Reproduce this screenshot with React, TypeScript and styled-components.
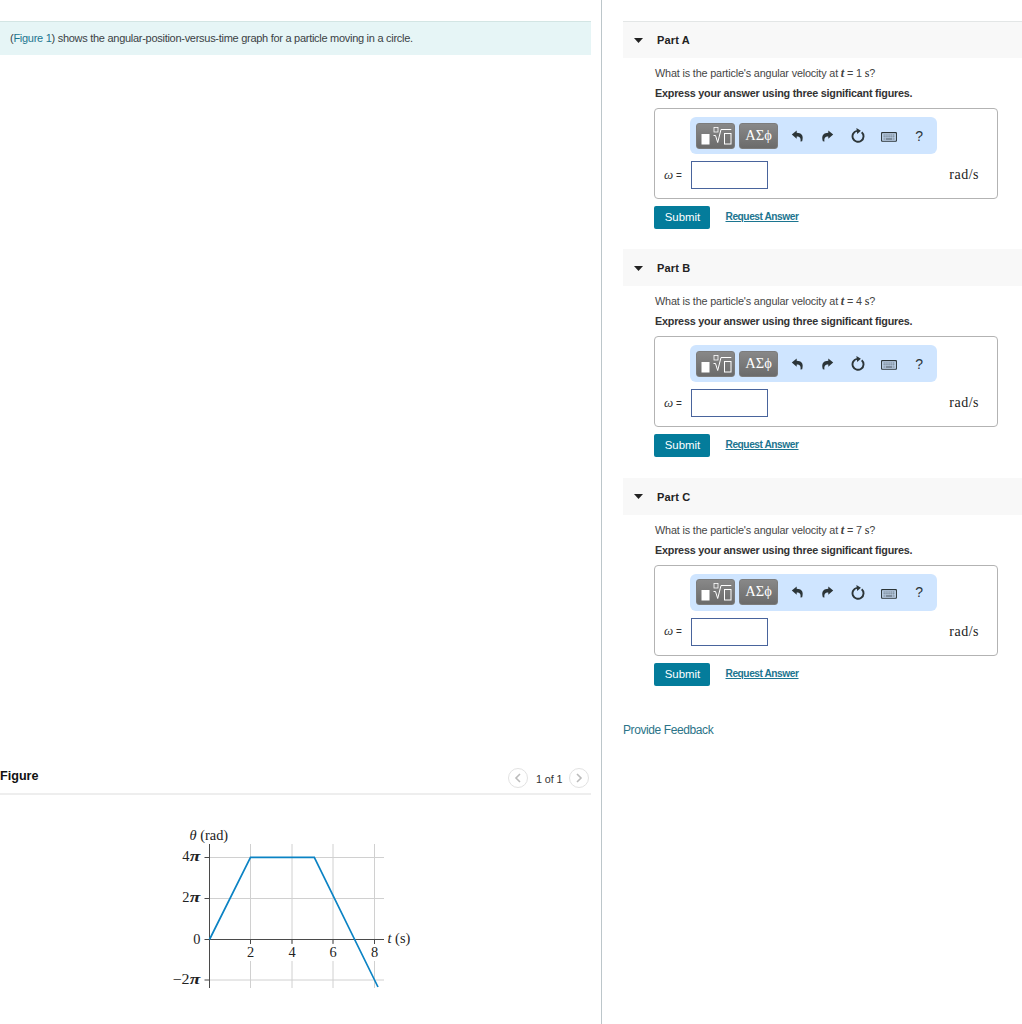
import React from "react";
import styled, { createGlobalStyle } from "styled-components";

const Global = createGlobalStyle`
  * { box-sizing: border-box; }
  body { margin: 0; background: #fff; font-family: "Liberation Sans", Arial, sans-serif; overflow: hidden; }
  svg { display: block; }
`;

const Page = styled.div`
  display: flex;
  height: 1024px;
  width: 1022px;
  overflow: hidden;
`;

const Left = styled.main`
  width: 602px;
  flex: none;
  border-right: 1px solid #bcc6ca;
  padding: 21px 10px 0 0;
  display: flex;
  flex-direction: column;
`;

const Prompt = styled.div`
  height: 34px;
  padding: 0 10px;
  border-top: 1px solid #d3e5e4;
  background: #e6f5f6;
  color: #3b4245;
  font-size: 11px;
  line-height: 32px;
  letter-spacing: -0.28px;
  white-space: nowrap;
`;

const FigureLink = styled.a`
  color: #1c7590;
`;

const FigureHead = styled.div`
  margin-top: auto;
  height: 34px;
  border-bottom: 2px solid #eeeeee;
  display: flex;
  align-items: center;
  justify-content: space-between;
  padding-right: 2px;
`;

const FigureTitle = styled.h2`
  margin: 0 0 3px;
  font-size: 12.6px;
  line-height: 16px;
  color: #111;
`;

const Pager = styled.div`
  display: flex;
  align-items: center;
  gap: 7px;
  padding-top: 2px;
`;

const PagerButton = styled.button`
  width: 20px;
  height: 20px;
  padding: 0;
  border: 1px solid #e2e2e2;
  border-radius: 50%;
  background: #fff;
  display: grid;
  place-items: center;
`;

const PagerText = styled.span`
  width: 27px;
  padding: 2px 0 0 1px;
  font-size: 10.8px;
  line-height: 14px;
  letter-spacing: -0.1px;
  color: #333;
  white-space: nowrap;
`;

const FigureBody = styled.div`
  height: 229px;
  padding: 25px 0 0 165px;
`;

const Right = styled.aside`
  flex: 1;
  min-width: 0;
  padding: 21px 0 0 21px;
`;

const Part = styled.section`
  height: 228.4px;
`;

const PartHead = styled.header<{ $first: boolean }>`
  height: 37px;
  border-top: 1px solid ${(p) => (p.$first ? "#e3e6e6" : "#f8f8f8")};
  background: #f8f8f8;
  display: flex;
  align-items: center;
  padding-left: 11px;
  gap: 14px;
`;

const PartTitle = styled.h3`
  margin: 0;
  font-size: 11px;
  line-height: 14px;
  letter-spacing: 0.15px;
  color: #222;
`;

const PartBody = styled.div`
  padding: 8px 24px 0 31px;
`;

const Question = styled.p`
  margin: 0 0 0 1px;
  font-size: 10.8px;
  line-height: 15px;
  letter-spacing: -0.15px;
  color: #454545;
  white-space: nowrap;
`;

const Variable = styled.i`
  font-family: "Liberation Serif", serif;
  font-weight: bold;
  font-size: 12.5px;
  line-height: 1;
`;

const Unit = styled.span`
  font-family: "Liberation Serif", serif;
  font-size: 12px;
  line-height: 1;
  color: #222;
`;

const Instruction = styled.p`
  margin: 4px 0 7px 1px;
  font-size: 10.8px;
  line-height: 16px;
  font-weight: bold;
  letter-spacing: -0.22px;
  color: #333;
  white-space: nowrap;
`;

const AnswerBox = styled.div`
  width: 344px;
  height: 91px;
  border: 1px solid #b3b3b3;
  border-radius: 4px;
  padding: 8px 18px 0 9px;
`;

const Toolbar = styled.div`
  width: 247px;
  height: 37px;
  margin-left: 26px;
  padding-left: 6px;
  border-radius: 6px;
  background: #cfe5ff;
  display: flex;
  align-items: center;
`;

const SymbolButton = styled.button`
  width: 39px;
  height: 26px;
  margin-right: 4px;
  padding: 0;
  border: 1px solid #7c7c7c;
  border-radius: 3px;
  background: linear-gradient(#888, #6b6b6b);
  color: #fff;
  font: 14.5px/20px "Liberation Serif", serif;
  display: grid;
  place-items: center;
`;

const SymbolText = styled.span`
  height: 22px;
`;

const Tools = styled.div`
  display: flex;
`;

const Tool = styled.span<{ $drop?: number }>`
  width: 30.5px;
  height: 20px;
  padding-top: ${(p) => p.$drop ?? 0}px;
  display: grid;
  place-items: center;
  font-size: 14px;
  line-height: 18px;
  color: #2c3538;
`;

const EntryRow = styled.div`
  display: flex;
  align-items: center;
  height: 28px;
  margin-top: 7px;
`;

const Omega = styled.label`
  width: 27px;
  font-size: 10px;
  line-height: 14px;
  color: #333;
  white-space: nowrap;
  i { font: italic 13px/14px "Liberation Serif", serif; }
`;

const Entry = styled.input`
  width: 77px;
  height: 28px;
  border: 1px solid #49649c;
  padding: 2px;
  background: #fff;
`;

const RadPerSec = styled.span`
  margin-left: auto;
  font: 14px/16px "Liberation Serif", serif;
  letter-spacing: 0.5px;
  color: #222;
`;

const Actions = styled.div`
  display: flex;
  margin-top: 7px;
  gap: 15.5px;
`;

const Submit = styled.button`
  width: 56px;
  height: 23px;
  padding: 0 0 0 1px;
  border: 0;
  border-radius: 2px;
  background: #047c9b;
  color: #fff;
  font: 11.4px/23px "Liberation Sans", sans-serif;
`;

const Request = styled.a`
  font-size: 10.2px;
  line-height: 21px;
  font-weight: bold;
  letter-spacing: -0.46px;
  color: #1c7590;
  text-decoration: underline;
  white-space: nowrap;
`;

const Feedback = styled.a`
  display: block;
  margin-top: 16px;
  font-size: 12px;
  line-height: 16px;
  letter-spacing: -0.4px;
  color: #2b7488;
`;

const Axis = styled.text`
  font-family: "Liberation Serif", serif;
  font-size: 14.4px;
  fill: #222;
`;

const PiSign = styled(Axis)`
  font-style: italic;
  font-weight: bold;
  font-size: 14px;
`;

const UndoIcon = () => (
  <svg width="13" height="12" viewBox="0 0 13 12">
    <path d="M.8 4.600 5.700.4v2.300C10 2.800 13 5 11.200 11.200l-1.700.3C10 8 9 6.500 5.700 6.500v2.300z" fill="#2c3538" />
  </svg>
);

const RedoIcon = () => (
  <svg width="13" height="12" viewBox="0 0 13 12">
    <path d="M12.200 4.600 7.300.4v2.300C3 2.800 0 5 1.800 11.200l1.700.3C3 8 4 6.500 7.300 6.500v2.300z" fill="#2c3538" />
  </svg>
);

const ResetIcon = () => (
  <svg width="14" height="15" viewBox="0 0 14 15">
    <path d="M10.700 4.200A5.500 5.500 0 1 1 5.900 2.900" fill="none" stroke="#2c3538" strokeWidth="1.900" />
    <path d="M5.400 0 9.900 2.700 6.200 6z" fill="#2c3538" />
  </svg>
);

const KeyboardIcon = () => (
  <svg width="16" height="10" viewBox="0 0 16 10">
    <rect x=".6" y=".6" width="14.800" height="8.600" rx=".5" fill="none" stroke="#2c3538" strokeWidth="1.100" />
    <path d="M2.500 3h11M2.500 4.900h11" stroke="#2c3538" strokeWidth="1" strokeDasharray="1.200 .75" />
    <path d="M2.500 7h1.200M4.500 7h7M12.300 7h1.200" stroke="#2c3538" strokeWidth="1.100" />
  </svg>
);

const RootIcon = () => (
  <svg width="33" height="20" viewBox="0 0 33 20">
    <rect x="2.500" y="8" width="8" height="10.500" fill="#fff" />
    <g fill="none" stroke="#fff">
      <rect x="15" y="1.500" width="4" height="4.500" strokeWidth=".8" />
      <path d="M14.500 9.500h2l2.200 7L22 3.500h10.300" strokeWidth="1" />
      <rect x="25.500" y="7.500" width="6.500" height="10.500" strokeWidth="1" />
    </g>
  </svg>
);

function AngleChart() {
  const xs = [250.5, 292, 333, 374.5];
  return (
    <svg width="255" height="170" viewBox="165 820 255 170">
      <g stroke="#d0d0d0" strokeWidth="1">
        {xs.map((x) => (
          <path key={x} d={`M${x} 844V943M${x} 961V988`} />
        ))}
        <path d="M209 857.500H384M209 898.500H384M209 980H384" />
      </g>
      <g stroke="#4a4a4a" strokeWidth="1" fill="none">
        <path d="M209.500 844V988M204.500 939.500H384M204.500 857.500h5M204.500 898.500h5M204.500 980h5" />
        {xs.map((x) => (
          <path key={x} d={`M${x} 939V944`} />
        ))}
      </g>
      <path d="M209.500 939.500 250.500 857.300H314.300L378 987" fill="none" stroke="#0b83c4" strokeWidth="1.700" />
      <Axis x="189.500" y="840"><tspan fontStyle="italic">θ</tspan> (rad)</Axis>
      <Axis x="387.500" y="943"><tspan fontStyle="italic">t</tspan> (s)</Axis>
      <Axis x="189.500" y="861" textAnchor="end">4</Axis>
      <Axis x="189.500" y="902" textAnchor="end">2</Axis>
      <Axis x="200.500" y="944" textAnchor="end">0</Axis>
      <Axis x="172.500" y="984" textLength="17" lengthAdjust="spacingAndGlyphs">−2</Axis>
      {[861, 902, 984].map((y) => (
        <PiSign key={y} x="189.800" y={y} textLength="10.500" lengthAdjust="spacingAndGlyphs">π</PiSign>
      ))}
      {xs.map((x, i) => (
        <Axis key={x} x={x} y="957" textAnchor="middle">{2 * (i + 1)}</Axis>
      ))}
    </svg>
  );
}

function QuestionPart({ name, time, first = false }: { name: string; time: number; first?: boolean }) {
  return (
    <Part>
      <PartHead $first={first}>
        <svg width="9" height="5" viewBox="0 0 9 5"><path d="M0 0h9L4.500 5z" fill="#222" /></svg>
        <PartTitle>Part {name}</PartTitle>
      </PartHead>
      <PartBody>
        <Question>
          What is the particle's angular velocity at <Variable>t</Variable> = {time} <Unit>s</Unit>?
        </Question>
        <Instruction>Express your answer using three significant figures.</Instruction>
        <AnswerBox>
          <Toolbar>
            <SymbolButton aria-label="Templates"><RootIcon /></SymbolButton>
            <SymbolButton><SymbolText>ΑΣϕ</SymbolText></SymbolButton>
            <Tools>
              <Tool><UndoIcon /></Tool>
              <Tool><RedoIcon /></Tool>
              <Tool><ResetIcon /></Tool>
              <Tool $drop={3}><KeyboardIcon /></Tool>
              <Tool>?</Tool>
            </Tools>
          </Toolbar>
          <EntryRow>
            <Omega><i>ω</i> =</Omega>
            <Entry aria-label="Angular velocity" />
            <RadPerSec>rad/s</RadPerSec>
          </EntryRow>
        </AnswerBox>
        <Actions>
          <Submit>Submit</Submit>
          <Request>Request Answer</Request>
        </Actions>
      </PartBody>
    </Part>
  );
}

export default function App() {
  return (
    <Page>
      <Global />
      <Left>
        <Prompt>
          (<FigureLink>Figure 1</FigureLink>) shows the angular-position-versus-time graph for a particle moving in a circle.
        </Prompt>
        <FigureHead>
          <FigureTitle>Figure</FigureTitle>
          <Pager>
            <PagerButton aria-label="Previous">
              <svg width="8" height="10" viewBox="0 0 8 10"><path d="M6 1 2 5l4 4" fill="none" stroke="#bbb" strokeWidth="1.600" /></svg>
            </PagerButton>
            <PagerText>1 of 1</PagerText>
            <PagerButton aria-label="Next">
              <svg width="8" height="10" viewBox="0 0 8 10"><path d="m2 1 4 4-4 4" fill="none" stroke="#bbb" strokeWidth="1.600" /></svg>
            </PagerButton>
          </Pager>
        </FigureHead>
        <FigureBody><AngleChart /></FigureBody>
      </Left>
      <Right>
        <QuestionPart name="A" time={1} first />
        <QuestionPart name="B" time={4} />
        <QuestionPart name="C" time={7} />
        <Feedback>Provide Feedback</Feedback>
      </Right>
    </Page>
  );
}
